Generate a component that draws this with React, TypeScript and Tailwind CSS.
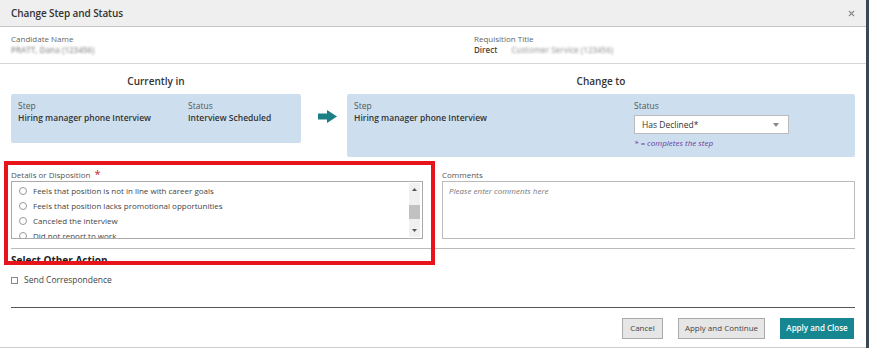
import { X } from 'lucide-react'

const reasons = [
  'Feels that position is not in line with career goals',
  'Feels that position lacks promotional opportunities',
  'Canceled the interview',
  'Did not report to work',
]

function Arrow() {
  return (
    <svg width="19" height="13" viewBox="0 0 19 13">
      <rect x="0" y="3.5" width="10" height="6" fill="#1b7f86" />
      <polygon points="9,0 19,6.5 9,13" fill="#1b7f86" />
    </svg>
  )
}

export default function App() {
  return (
    <div className="relative flex h-[348px] w-[869px] overflow-hidden bg-white text-[#333] font-['Open_Sans',sans-serif]">
      <div className="flex w-[866px] flex-col">
        {/* header */}
        <div className="flex h-[27px] items-center justify-between border-b border-[#c4c4c4] bg-[#efefef] pl-[11px] pr-[10px]">
          <span className="text-[10px] font-semibold tracking-[-0.1px] text-[#333]">Change Step and Status</span>
          <X className="h-[9px] w-[9px] text-[#888]" strokeWidth={3} />
        </div>

        {/* candidate info */}
        <div className="flex h-[37px] border-b border-[#d6d6d6] pt-[6px] text-[8px] leading-[11px]">
          <div className="w-[474px] pl-[11px]">
            <div className="text-[#666]">Candidate Name</div>
            <div className="font-semibold text-[#999] blur-[0.8px]">PRATT, Dana (123456)</div>
          </div>
          <div>
            <div className="text-[#666]">Requisition Title</div>
            <div className="flex gap-[14px] font-semibold">
              <span className="text-[#444]">Direct</span>
              <span className="text-[#aaa] blur-[0.8px]">Customer Service (123456)</span>
            </div>
          </div>
        </div>

        {/* step columns */}
        <div className="flex px-[11px] pt-[10px]">
          <div className="w-[290px]">
            <div className="text-center text-[10px] font-semibold leading-[14px] text-[#333]">Currently in</div>
            <div className="mt-[6px] flex h-[49px] rounded-[2px] bg-[#cddfee] px-[7px] pt-[6px] text-[8.5px] leading-[12px]">
              <div className="w-[170px]">
                <div className="text-[#555]">Step</div>
                <div className="font-semibold text-[#333]">Hiring manager phone Interview</div>
              </div>
              <div>
                <div className="text-[#555]">Status</div>
                <div className="font-semibold text-[#333]">Interview Scheduled</div>
              </div>
            </div>
          </div>
          <div className="flex w-[46px] items-start justify-center pl-[6px] pt-[36px]">
            <Arrow />
          </div>
          <div className="flex-1">
            <div className="text-center text-[10px] font-semibold leading-[14px] text-[#333]">Change to</div>
            <div className="mt-[6px] flex h-[63px] rounded-[2px] bg-[#cddfee] pl-[7px] pt-[6px] text-[8.5px] leading-[12px]">
              <div className="w-[280px]">
                <div className="text-[#555]">Step</div>
                <div className="font-semibold text-[#333]">Hiring manager phone Interview</div>
              </div>
              <div>
                <div className="text-[#555]">Status</div>
                <div className="mt-[3px] flex h-[19px] w-[155px] items-center justify-between border border-[#bbb] bg-white pl-[7px] pr-[9px] text-[#333]">
                  <span>Has Declined*</span>
                  <svg width="6" height="4" viewBox="0 0 6 4"><polygon points="0,0 6,0 3,4" fill="#888" /></svg>
                </div>
                <div className="mt-[3px] text-[8px] italic text-[#6a3aa0]">* = completes the step</div>
              </div>
            </div>
          </div>
        </div>

        {/* details & comments */}
        <div className="mt-[12px] flex gap-[19px] px-[11px] text-[8px]">
          <div className="w-[412px]">
            <div className="leading-[12px] text-[#555]">
              Details or Disposition <span className="ml-[2px] text-[11px] leading-[8px] text-[#c0282d]">*</span>
            </div>
            <div className="flex h-[58px] overflow-hidden border border-[#aaa] bg-white">
              <div className="flex-1 pl-[7px] pt-[1px]">
                {reasons.map((r) => (
                  <div key={r} className="flex h-[15px] items-center gap-[6px] text-[#444]">
                    <span className="h-[8px] w-[8px] rounded-full border border-[#999] bg-white" />
                    <span>{r}</span>
                  </div>
                ))}
              </div>
              <div className="mr-[2px] my-[1px] flex w-[11px] flex-col items-center bg-[#f0f0f0]">
                <svg className="mt-[5px]" width="5" height="3" viewBox="0 0 5 3"><polygon points="0,3 5,3 2.5,0" fill="#555" /></svg>
                <div className="mt-[14px] h-[14px] w-[11px] bg-[#c1c1c1]" />
                <svg className="mt-auto mb-[5px]" width="5" height="3" viewBox="0 0 5 3"><polygon points="0,0 5,0 2.5,3" fill="#555" /></svg>
              </div>
            </div>
          </div>
          <div className="flex-1">
            <div className="leading-[12px] text-[#555]">Comments</div>
            <div className="h-[58px] border border-[#bbb] bg-white px-[6px] pt-[3px] italic text-[#777]">
              Please enter comments here
            </div>
          </div>
        </div>

        <div className="mx-[11px] mt-[9px] border-t border-[#bbb]" />

        <div className="pl-[11px] pt-[4px] text-[10px] font-bold leading-[14px] text-[#222]">Select Other Action</div>
        <div className="mt-[7px] flex items-center gap-[6px] pl-[11px] text-[8.5px] text-[#444]">
          <span className="h-[7px] w-[7px] border border-[#888] bg-white" />
          <span>Send Correspondence</span>
        </div>

        <div className="mx-[11px] mt-[20px] border-t border-[#555]" />

        <div className="flex justify-end gap-[15px] px-[12px] pt-[10px] text-[8px]">
          <button className="h-[21px] w-[41px] border border-[#aaa] bg-[#e6e6e6] text-[#444]">Cancel</button>
          <button className="h-[21px] w-[87px] border border-[#aaa] bg-[#e6e6e6] text-[#444]">Apply and Continue</button>
          <button className="h-[21px] w-[74px] bg-[#168690] font-semibold text-white">Apply and Close</button>
        </div>
        <div className="mt-auto border-b border-[#ccc]" />
      </div>
      <div className="w-[3px] bg-[#3a4756]" />

      {/* annotation highlight */}
      <div className="absolute left-[4px] top-[161px] h-[104px] w-[431px] border-[4px] border-[#e8141c]" />
    </div>
  )
}
